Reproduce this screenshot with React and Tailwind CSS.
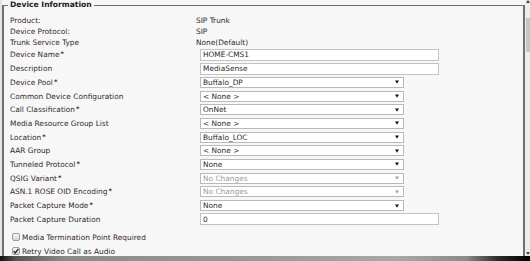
import React from "react";

const textRows = [
  ["Product:", "SIP Trunk"],
  ["Device Protocol:", "SIP"],
  ["Trunk Service Type", "None(Default)"],
];

const inputRows = [
  { label: "Device Name", req: true, value: "HOME-CMS1" },
  { label: "Description", value: "MediaSense" },
];

const selectRows = [
  { label: "Device Pool", req: true, value: "Buffalo_DP" },
  { label: "Common Device Configuration", value: "< None >" },
  { label: "Call Classification", req: true, value: "OnNet" },
  { label: "Media Resource Group List", value: "< None >" },
  { label: "Location", req: true, value: "Buffalo_LOC" },
  { label: "AAR Group", value: "< None >" },
  { label: "Tunneled Protocol", req: true, value: "None" },
  { label: "QSIG Variant", req: true, value: "No Changes", disabled: true },
  { label: "ASN.1 ROSE OID Encoding", req: true, value: "No Changes", disabled: true },
  { label: "Packet Capture Mode", req: true, value: "None" },
];

function Label({ children, req }) {
  return (
    <div className="w-[186px] shrink-0 flex items-center text-[#35282a]">
      <span>{children}</span>
      {req && <span className="self-start ml-[1px] text-[6.5px] font-bold leading-[8px]">*</span>}
    </div>
  );
}

function Select({ value, disabled }) {
  return (
    <div
      className={`ml-[4px] w-[204px] h-[11px] bg-white border border-[#b9b9b9] flex items-center justify-between pl-[2px] pr-[4px] ${
        disabled ? "text-[#9a9a9a]" : "text-[#2a2a2a]"
      }`}
    >
      <span>{value}</span>
      <svg width="4" height="4" viewBox="0 0 4 4">
        <path d="M0 0.5H4L2 3.8Z" fill={disabled ? "#a0a0a0" : "#111"} />
      </svg>
    </div>
  );
}

function Input({ value }) {
  return (
    <div className="ml-[4px] w-[239px] h-[12px] bg-white border border-[#c3c3c3] flex items-center pl-[2px] text-[#2a2a2a]">
      {value}
    </div>
  );
}

function Checkbox({ checked }) {
  return (
    <div className="w-[8px] h-[8px] rounded-[2px] border border-[#9c9c9c] bg-[linear-gradient(#f4f4f4,#d8d8d8)] flex items-center justify-center">
      {checked && (
        <svg width="6" height="6" viewBox="0 0 6 6">
          <path d="M0.6 3.2L2.3 4.9L5.4 0.8" stroke="#222" strokeWidth="1.3" fill="none" />
        </svg>
      )}
    </div>
  );
}

export default function App() {
  return (
    <div className="w-[530px] h-[261px] flex flex-col bg-[#f7f7f7] overflow-hidden font-['DejaVu_Sans',sans-serif] text-[7.4px] leading-[9px]">
      <div className="flex-1 flex overflow-hidden">
        <div className="w-[2px] bg-[#e4e4e4]" />
        <fieldset className="w-[523px] border-t border-l-2 border-r-2 border-[#6f6f6f] pb-0">
          <legend className="ml-[4px] px-[2px] font-bold text-[#222] leading-[10px] text-[7.6px]">Device Information</legend>
          <div className="pl-[6px] pt-[4.5px]">
            {textRows.map(([l, v]) => (
              <div key={l} className="h-[11px] flex">
                <Label>{l}</Label>
                <div className="flex items-center text-[#2a2a2a]">{v}</div>
              </div>
            ))}
            {inputRows.map((r) => (
              <div key={r.label} className="h-[14px] flex items-center">
                <Label req={r.req}>{r.label}</Label>
                <Input value={r.value} />
              </div>
            ))}
            {selectRows.map((r) => (
              <div key={r.label} className="h-[13.7px] flex items-center">
                <Label req={r.req}>{r.label}</Label>
                <Select value={r.value} disabled={r.disabled} />
              </div>
            ))}
            <div className="h-[14px] flex items-center">
              <Label>Packet Capture Duration</Label>
              <Input value="0" />
            </div>
            <div className="mt-[4px] h-[14px] flex items-center gap-[2px] pl-[2px] text-[#35282a]">
              <Checkbox />
              <span>Media Termination Point Required</span>
            </div>
            <div className="h-[14px] flex items-center gap-[2px] pl-[2px] text-[#35282a]">
              <Checkbox checked />
              <span>Retry Video Call as Audio</span>
            </div>
          </div>
        </fieldset>
        <div className="w-[5px] bg-[#ededed] flex flex-col">
          <svg width="5" height="3" viewBox="0 0 5 3" className="ml-[1px]">
            <path d="M2 0L4 3H0Z" fill="#444" />
          </svg>
          <div className="mt-[15px] ml-[1px] w-[4px] h-[34px] bg-[#c6c6c6]" />
          <div className="flex-1" />
          <svg width="5" height="3" viewBox="0 0 5 3" className="ml-[1px] mb-[1px]">
            <path d="M0 0H4L2 3Z" fill="#444" />
          </svg>
        </div>
      </div>
      <div className="h-[5px] bg-[linear-gradient(to_right,#111_0%,#555_3%,#8a8a8a_12%,#9a9a9a_50%,#a8a8a8_75%,#8a8a8a_88%,#2a2a2a_94%,#000_100%)]" />
    </div>
  );
}
